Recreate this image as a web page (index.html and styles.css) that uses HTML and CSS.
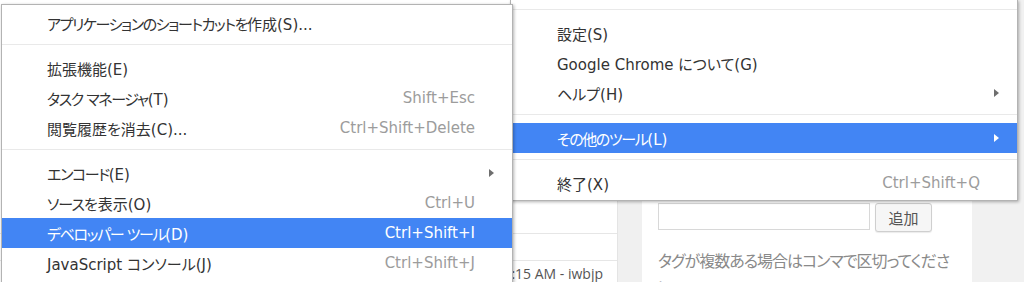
FILE: index.html
```html
<!DOCTYPE html>
<html lang="ja">
<head>
<meta charset="utf-8">
<title>Chrome menu</title>
<link rel="stylesheet" href="styles.css">
</head>
<body>
<div class="page">
  <div class="list">
    <div class="row"></div>
    <div class="row">:15 AM - iwbjp</div>
  </div>
  <div class="gutter"></div>
  <div class="panel">
    <div class="form">
      <div class="input"></div>
      <div class="btn">追加</div>
    </div>
    <p class="note">タグが複数ある場合はコンマで区切ってくださ<br>い</p>
  </div>
  <div class="side"></div>
</div>

<div class="menu menu-sub">
  <div class="sep"></div>
  <div class="item"><span class="label">設定(S)</span><span class="key"></span><span class="slot"></span></div>
  <div class="item"><span class="label">Google Chrome について(G)</span><span class="key"></span><span class="slot"></span></div>
  <div class="item"><span class="label">ヘルプ(H)</span><span class="key"></span><span class="slot"><i class="arrow"></i></span></div>
  <div class="sep"></div>
  <div class="item active"><span class="label"><span class="ja">その他のツール</span>(L)</span><span class="key"></span><span class="slot"><i class="arrow"></i></span></div>
  <div class="sep"></div>
  <div class="item"><span class="label">終了(X)</span><span class="key">Ctrl+Shift+Q</span><span class="slot"></span></div>
</div>

<div class="menu menu-main">
  <div class="item"><span class="label"><span class="ja">アプリケーションのショートカットを</span>作成(S)...</span><span class="key"></span><span class="slot"></span></div>
  <div class="sep"></div>
  <div class="item"><span class="label">拡張機能(E)</span><span class="key"></span><span class="slot"></span></div>
  <div class="item"><span class="label"><span class="ja">タスク マネージャ</span>(T)</span><span class="key">Shift+Esc</span><span class="slot"></span></div>
  <div class="item"><span class="label">閲覧履歴を消去(C)...</span><span class="key">Ctrl+Shift+Delete</span><span class="slot"></span></div>
  <div class="sep"></div>
  <div class="item"><span class="label"><span class="ja">エンコード</span>(E)</span><span class="key"></span><span class="slot"><i class="arrow"></i></span></div>
  <div class="item"><span class="label"><span class="ja-s">ソース</span>を表示(O)</span><span class="key">Ctrl+U</span><span class="slot"></span></div>
  <div class="item active"><span class="label"><span class="ja">デベロッパー ツール</span>(D)</span><span class="key">Ctrl+Shift+I</span><span class="slot"></span></div>
  <div class="item"><span class="label">JavaScript コンソール(J)</span><span class="key">Ctrl+Shift+J</span><span class="slot"></span></div>
</div>
</body>
</html>
```

FILE: styles.css
```css
html, body {
  margin: 0;
  height: 282px;
  overflow: hidden;
  background: #fff;
}

.page {
  display: flex;
  height: 282px;
}

.list {
  width: 617px;
  flex: none;
  padding-top: 233px;
  box-sizing: border-box;
  font-family: "Open Sans", sans-serif;
  font-size: 14px;
  color: #555;
}

.row {
  height: 27px;
  line-height: 26px;
  border-top: 1px solid #e6e6e6;
  box-sizing: border-box;
  text-align: right;
  padding-right: 14px;
  white-space: nowrap;
}

.gutter {
  width: 25px;
  flex: none;
  background: #f0f0f0;
  border-left: 1px solid #e4e4e4;
  box-sizing: border-box;
}

.panel {
  width: 330px;
  flex: none;
  padding: 203px 0 0 16px;
  box-sizing: border-box;
}

.form {
  display: flex;
  gap: 5px;
  align-items: flex-start;
}

.input {
  width: 212px;
  height: 27px;
  border: 1px solid #d8d8d8;
  box-sizing: border-box;
}

.btn {
  width: 57px;
  height: 29px;
  border: 1px solid #cfcfcf;
  border-radius: 3px;
  background: #f6f6f6;
  box-shadow: 0 1px 1px rgba(0, 0, 0, 0.08);
  box-sizing: border-box;
  display: flex;
  align-items: center;
  justify-content: center;
  font-family: "Noto Sans CJK JP", sans-serif;
  font-size: 15px;
  color: #555;
}

.note {
  margin: 15px 0 0;
  font-family: "Noto Sans CJK JP", sans-serif;
  font-size: 16px;
  line-height: 26px;
  color: #8a8a8a;
  font-feature-settings: "palt";
  letter-spacing: -1px;
  white-space: nowrap;
}

.side {
  flex: 1;
  background: #f1f1f1;
}

.menu {
  position: absolute;
  background: #fff;
  border: 1px solid #b3b3b3;
  box-shadow: 1px 1px 3px rgba(0, 0, 0, 0.3);
  box-sizing: border-box;
  font-family: "DejaVu Sans", "Noto Sans CJK JP", sans-serif;
  font-size: 15px;
  color: #333;
  font-feature-settings: "palt";
}

.menu-main {
  left: 1px;
  top: 4px;
  width: 512px;
  padding: 3px 0 10px;
  z-index: 2;
}

.menu-sub {
  left: 510px;
  top: 0;
  width: 508px;
  border-top: none;
  padding: 3px 0 2px;
  z-index: 1;
}

.item {
  display: flex;
  align-items: center;
  height: 30px;
  padding-left: 45px;
  white-space: nowrap;
}

.menu-sub .item {
  padding-left: 46px;
}

.label {
  flex: 1;
}

.ja {
  letter-spacing: -1.4px;
}

.ja-s {
  letter-spacing: -1px;
}

.key {
  color: #9c9c9c;
}

.slot {
  width: 37px;
  flex: none;
  display: flex;
  align-items: center;
  padding-left: 14px;
  box-sizing: border-box;
}

.arrow {
  display: block;
  width: 0;
  height: 0;
  border-left: 5px solid #6e6e6e;
  border-top: 4px solid transparent;
  border-bottom: 4px solid transparent;
}

.item.active {
  background: #4285f4;
  color: #fff;
}

.item.active .key {
  color: #fff;
}

.item.active .arrow {
  border-left-color: #fff;
}

.sep {
  height: 1px;
  background: #e9e9e9;
  margin: 6px 0 8px;
}
```
